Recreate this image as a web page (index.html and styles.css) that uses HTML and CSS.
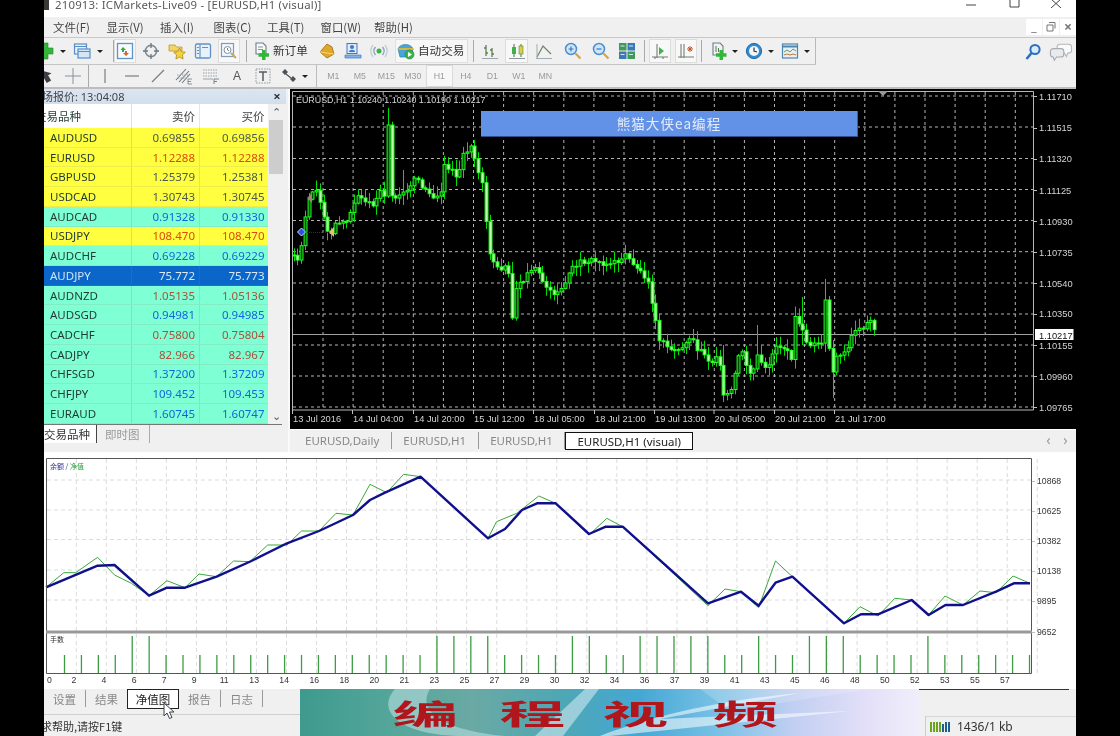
FILE: index.html
```html
<!DOCTYPE html>
<html lang="zh">
<head>
<meta charset="utf-8">
<title>MetaTrader 4</title>
<link rel="stylesheet" href="styles.css">
</head>
<body>
<svg class="defs" width="0" height="0" aria-hidden="true">
  <symbol id="i-plus" viewBox="0 0 18 18"><path d="M6 1h6v5h5v6h-5v5H6v-5H1V6h5z" fill="#35b53a" stroke="#1f8c2a" stroke-width=".6"/></symbol>
  <symbol id="i-prof" viewBox="0 0 18 18"><rect x="1.5" y="2" width="12" height="10" fill="#e4f0fb" stroke="#5b8fc4" stroke-width="1.2"/><rect x="5" y="7" width="12" height="9" fill="#d5e6f7" stroke="#5b8fc4" stroke-width="1.2"/><path d="M1.5 4.5h12M5 9.5h12" stroke="#5b8fc4"/></symbol>
  <symbol id="i-arrows" viewBox="0 0 18 18"><rect x="1.5" y="1.5" width="15" height="15" fill="#f6fafd" stroke="#5f93c8" stroke-width="1.3"/><path d="M5 4l3 3H6v2H4V7H2.500z" fill="#35a83a" transform="translate(2 1)"/><path d="M10 14l-3-3h2V9h2v2h2z" fill="#d8662a"/></symbol>
  <symbol id="i-cross" viewBox="0 0 18 18"><circle cx="9" cy="9" r="5.600" fill="none" stroke="#7f8a93" stroke-width="1.600"/><path d="M9 1v5M9 12v5M1 9h5M12 9h5" stroke="#6b757d" stroke-width="1.300"/></symbol>
  <symbol id="i-star" viewBox="0 0 18 18"><path d="M1 3h6l1.500 2H14v4H1z" fill="#f3d468" stroke="#b99a34" stroke-width=".8"/><path d="M11.500 6l1.800 3.700 4 .5-2.900 2.800.7 4-3.600-1.900-3.600 1.900.7-4-2.900-2.800 4-.5z" fill="#f5d23c" stroke="#a78a20" stroke-width=".8"/></symbol>
  <symbol id="i-list" viewBox="0 0 18 18"><rect x="1.500" y="2" width="15" height="14" rx="1.500" fill="#e9f2fb" stroke="#5f93c8" stroke-width="1.300"/><path d="M6 2.500v13" stroke="#5f93c8" stroke-width="1.200"/><path d="M3 5.500h2M3 8.500h2M3 11.500h2M8 5.500h6" stroke="#6c8fb2"/></symbol>
  <symbol id="i-test" viewBox="0 0 18 18"><rect x="1.500" y="1.500" width="12" height="13" fill="#f3f7fb" stroke="#7f9dbb" stroke-width="1.200"/><circle cx="7.500" cy="8" r="3.500" fill="#fff" stroke="#8391a0"/><path d="M7.500 6v2l1.500 1" stroke="#707a84" fill="none"/><path d="M11 11l5 5" stroke="#d8a840" stroke-width="2"/></symbol>
  <symbol id="i-order" viewBox="0 0 18 18"><path d="M3 1h7l3 3v8H3z" fill="#f6f8fa" stroke="#6f7d8a" stroke-width="1.100"/><path d="M5 5h5M5 7.500h5" stroke="#8a97a3"/><path d="M9 8h3.500v3.300h3.500v3.400h-3.500V18H9v-3.300H5.500v-3.400H9z" fill="#33b53a"/></symbol>
  <symbol id="i-gold" viewBox="0 0 18 18"><path d="M2 10l7-8 5 3 2 7-7 4z" fill="#e0a72a" stroke="#a87412" stroke-width=".9"/><path d="M2 10l7 1 7 1" stroke="#f6d777" fill="none"/></symbol>
  <symbol id="i-person" viewBox="0 0 18 18"><rect x="3" y="1.500" width="10" height="10" fill="#dfeafa" stroke="#3f78c6"/><circle cx="8" cy="5" r="2" fill="#3f78c6"/><path d="M5 10c0-3 6-3 6 0z" fill="#3f78c6"/><path d="M1 13h16v3H1z" fill="#7fb0e6" stroke="#3f78c6" stroke-width=".7"/></symbol>
  <symbol id="i-signal" viewBox="0 0 18 18"><circle cx="9" cy="9" r="2.500" fill="#3eb04a"/><path d="M5.500 5a6 6 0 0 0 0 8M12.500 5a6 6 0 0 1 0 8" fill="none" stroke="#8aa4bc" stroke-width="1.500"/><path d="M3 3a9.500 9.500 0 0 0 0 12M15 3a9.500 9.500 0 0 1 0 12" fill="none" stroke="#c0ccd6" stroke-width="1.300"/></symbol>
  <symbol id="i-auto" viewBox="0 0 18 18"><path d="M1 7c2-6 13-6 15 0l-2 8H3z" fill="#46a6dc" stroke="#2f7fae" stroke-width=".7"/><path d="M1.500 7h15" stroke="#d6b93a" stroke-width="2"/><circle cx="12.500" cy="12.500" r="4.500" fill="#39b54a" stroke="#1f8530" stroke-width=".6"/><path d="M11 10l4 2.500-4 2.500z" fill="#fff"/></symbol>
  <symbol id="i-bars" viewBox="0 0 18 18"><path d="M5 3v11M3 6h2M5 11h2M11 6v9M9 8h2M11 12h2" stroke="#5d7f52" stroke-width="1.300" fill="none"/><path d="M1 16.500h16" stroke="#9aa5ae"/></symbol>
  <symbol id="i-candle" viewBox="0 0 18 18"><path d="M6 2v13M13 2v13" stroke="#5d7f52" stroke-width="1.100"/><rect x="4" y="5" width="4" height="7" fill="#3cb44a"/><rect x="11" y="4" width="4" height="8" fill="#d9d23c" stroke="#5d7f52" stroke-width=".6"/><path d="M1 16.500h16" stroke="#8a97a3"/></symbol>
  <symbol id="i-line" viewBox="0 0 18 18"><path d="M2 15L8 4l8 8" fill="none" stroke="#6d8a63" stroke-width="1.300"/><path d="M1 16.500h16M2 2v14" stroke="#a0abb4"/></symbol>
  <symbol id="i-zin" viewBox="0 0 18 18"><circle cx="7" cy="7" r="5.500" fill="#cfe6f8" stroke="#4b8fd0" stroke-width="1.500"/><path d="M4.500 7h5M7 4.500v5" stroke="#3a78b8" stroke-width="1.200"/><path d="M11 11l5.500 5.500" stroke="#d7a63e" stroke-width="2.200"/></symbol>
  <symbol id="i-zout" viewBox="0 0 18 18"><circle cx="7" cy="7" r="5.500" fill="#cfe6f8" stroke="#4b8fd0" stroke-width="1.500"/><path d="M4.500 7h5" stroke="#3a78b8" stroke-width="1.200"/><path d="M11 11l5.500 5.500" stroke="#d7a63e" stroke-width="2.200"/></symbol>
  <symbol id="i-tile" viewBox="0 0 18 18"><rect x="1" y="1" width="7.500" height="7.500" fill="#3f9a55"/><rect x="9.500" y="1" width="7.500" height="7.500" fill="#3a78b8"/><rect x="1" y="9.500" width="7.500" height="7.500" fill="#3a78b8"/><rect x="9.500" y="9.500" width="7.500" height="7.500" fill="#3f9a55"/><path d="M2.500 4h4M11 4h4M2.500 12.500h4M11 12.500h4" stroke="#d8e8f4"/></symbol>
  <symbol id="i-shift" viewBox="0 0 18 18"><path d="M6 2v14M1 15h16M4 15v2M12 15v2" stroke="#6f7f73" stroke-width="1.100"/><path d="M8 5l5 4-5 4z" fill="#3cb44a"/></symbol>
  <symbol id="i-scroll" viewBox="0 0 18 18"><path d="M4 2v14M7 2v14M1 15h16" stroke="#6f7f73" stroke-width="1.100"/><path d="M13 4v6M10 7h6M11 5l4 4M15 5l-4 4" stroke="#c0562a" stroke-width="1"/></symbol>
  <symbol id="i-new" viewBox="0 0 18 18"><path d="M3 1h7l3 3v9H3z" fill="#eef2f5" stroke="#6f7d8a" stroke-width="1.100"/><path d="M6 4v6M8.500 6v4" stroke="#5c7a50"/><path d="M9.500 8h3.500v3.300h3.500v3.400H13V18H9.500v-3.300H6v-3.400h3.500z" fill="#33b53a"/></symbol>
  <symbol id="i-clock" viewBox="0 0 18 18"><circle cx="9" cy="9" r="7.600" fill="#2f8ad2" stroke="#1d6aa8"/><circle cx="9" cy="9" r="5" fill="#f2f6f8"/><path d="M9 5.500V9l3 1" stroke="#333" fill="none" stroke-width="1.200"/></symbol>
  <symbol id="i-tpl" viewBox="0 0 18 18"><rect x="1.500" y="2" width="15" height="14" fill="#e6f0f6" stroke="#4e86ad" stroke-width="1.200"/><path d="M1.500 4.500h15" stroke="#4e86ad" stroke-width="2"/><path d="M3 10l3-2 3 2 3-3 3 2" stroke="#53a45a" fill="none"/><path d="M3 13l3-1 3 1 3-1 3 1" stroke="#c2743a" fill="none"/></symbol>
  <symbol id="i-search" viewBox="0 0 18 18"><circle cx="11" cy="6.500" r="4.600" fill="#d8ebfa" stroke="#2c6fc0" stroke-width="2"/><path d="M7.500 10L2.500 16" stroke="#2c6fc0" stroke-width="2.600"/></symbol>
  <symbol id="i-chat" viewBox="0 0 20 18"><path d="M9 2h8a2.500 2.500 0 0 1 2.500 2.500v3A2.500 2.500 0 0 1 17 10h-1l-1 3-2-3H9a2.500 2.500 0 0 1-2.500-2.500v-3A2.500 2.500 0 0 1 9 2z" fill="#fafafa" stroke="#b3b8bc"/><path d="M3 6h7a2.500 2.500 0 0 1 2.500 2.500v2.500A2.500 2.500 0 0 1 10 13.500H6l-2 3-1-3a2.500 2.500 0 0 1-2.500-2.500V8.500A2.500 2.500 0 0 1 3 6z" fill="#e8eaeb" stroke="#a6abb0"/></symbol>
  <symbol id="i-pick" viewBox="0 0 18 18"><path d="M9 3l7 7h-4v6H7v-6H3z" fill="#3b3f44" transform="rotate(-30 9 9)"/></symbol>
  <symbol id="i-crossh" viewBox="0 0 18 18"><path d="M9 1v16M1 9h16" stroke="#8a9299" stroke-width="1"/></symbol>
  <symbol id="i-vline" viewBox="0 0 18 18"><path d="M9 2v14" stroke="#767f87" stroke-width="1.200"/></symbol>
  <symbol id="i-hline" viewBox="0 0 18 18"><path d="M2 9h14" stroke="#767f87" stroke-width="1.200"/></symbol>
  <symbol id="i-trend" viewBox="0 0 18 18"><path d="M3 15L15 3" stroke="#767f87" stroke-width="1.200"/></symbol>
  <symbol id="i-fibo" viewBox="0 0 18 18"><path d="M1 13L11 2M4 15L14 4M7 16l8-9" stroke="#6f7880" stroke-width="1.100"/><path d="M2 8h11M3 11h10" stroke="#9aa2a9" stroke-dasharray="1.500 1"/><path d="M13 12h4M13 12v5M13 14.500h3M13 17h4" stroke="#6f7880" stroke-width=".8"/></symbol>
  <symbol id="i-fline" viewBox="0 0 18 18"><path d="M1 3h14M1 6h14M1 9h14" stroke="#9aa2a9" stroke-dasharray="1.500 1"/><path d="M1 12h10" stroke="#9aa2a9"/><path d="M12 12h5M12 12v5M12 14.500h3" stroke="#6f7880" stroke-width=".9"/></symbol>
  <symbol id="i-tbox" viewBox="0 0 18 18"><rect x="2" y="2" width="14" height="14" fill="none" stroke="#8d959c" stroke-dasharray="1.500 1.200"/><path d="M5 5h8M9 5v9" stroke="#555c63" stroke-width="1.500"/></symbol>
  <symbol id="i-shapes" viewBox="0 0 18 18"><path d="M2 5l3-3 3 3-3 3zM10 12l3-3 3 3-3 3z" fill="#4b5258"/><path d="M6 7l5 4" stroke="#4b5258" stroke-width="1.200"/></symbol>
</svg>

<div class="app">
  <header class="titlebar">
    <span class="appicon"></span>
    <span class="title-text">210913: ICMarkets-Live09 - [EURUSD,H1 (visual)]</span>
    <span class="winbtns">
      <span class="winbtn"><svg width="12" height="12" viewBox="0 0 12 12"><path d="M1 5h10" class="win-stroke"/></svg></span>
      <span class="winbtn"><svg width="12" height="12" viewBox="0 0 12 12"><path d="M2-3h9v10H2z" class="win-stroke"/></svg></span>
      <span class="winbtn"><svg width="12" height="12" viewBox="0 0 12 12"><path d="M1-1l10 9M11-1L1 8" class="win-stroke"/></svg></span>
    </span>
  </header>

  <nav class="menubar">
    <span class="menu">文件(F)</span><span class="menu">显示(V)</span><span class="menu">插入(I)</span><span class="menu">图表(C)</span><span class="menu">工具(T)</span><span class="menu">窗口(W)</span><span class="menu">帮助(H)</span>
    <span class="mdi">
      <span class="mdi-btn">_</span>
      <span class="mdi-btn"><svg width="10" height="10" viewBox="0 0 10 10"><path d="M3 .5h6v6M1 3h6v6H1z" fill="none" stroke="#777"/></svg></span>
      <span class="mdi-btn mdi-x">×</span>
    </span>
  </nav>

  <div class="toolbar t1">
    <div class="tools tools-main">
      <span class="ic w13 clip"><svg class="s18 pull8"><use href="#i-plus"/></svg></span>
      <span class="caret w11"></span>
      <span class="ic w28"><svg class="s18"><use href="#i-prof"/></svg></span>
      <span class="caret w7"></span>
      <span class="sep sep-a"></span>
      <span class="ic w26 on"><svg class="s18"><use href="#i-arrows"/></svg></span>
      <span class="ic w26"><svg class="s18"><use href="#i-cross"/></svg></span>
      <span class="ic w26"><svg class="s18"><use href="#i-star"/></svg></span>
      <span class="ic w26"><svg class="s18"><use href="#i-list"/></svg></span>
      <span class="ic w26 on"><svg class="s18"><use href="#i-test"/></svg></span>
      <span class="sep sep-b"></span>
      <span class="ic w26"><svg class="s18"><use href="#i-order"/></svg></span>
      <span class="tool-label neworder">新订单</span>
      <span class="ic w26 ml5"><svg class="s18"><use href="#i-gold"/></svg></span>
      <span class="ic w26"><svg class="s18"><use href="#i-person"/></svg></span>
      <span class="ic w26"><svg class="s18"><use href="#i-signal"/></svg></span>
      <span class="autobox"><svg class="s18"><use href="#i-auto"/></svg><span class="tool-label">自动交易</span></span>
      <span class="sep sep-c"></span>
      <span class="ic w27"><svg class="s18"><use href="#i-bars"/></svg></span>
      <span class="ic w27 on"><svg class="s18"><use href="#i-candle"/></svg></span>
      <span class="ic w27"><svg class="s18"><use href="#i-line"/></svg></span>
      <span class="ic w28 ml2"><svg class="s18"><use href="#i-zin"/></svg></span>
      <span class="ic w28"><svg class="s18"><use href="#i-zout"/></svg></span>
      <span class="ic w24"><svg class="s18"><use href="#i-tile"/></svg></span>
      <span class="sep sep-d"></span>
      <span class="ic w26 on"><svg class="s18"><use href="#i-shift"/></svg></span>
      <span class="ic w26 on"><svg class="s18"><use href="#i-scroll"/></svg></span>
      <span class="sep sep-e"></span>
      <span class="ic w24 ml5"><svg class="s18"><use href="#i-new"/></svg></span>
      <span class="caret w7"></span>
      <span class="ic w26 ml3"><svg class="s18"><use href="#i-clock"/></svg></span>
      <span class="caret w7"></span>
      <span class="ic w26 ml3"><svg class="s18"><use href="#i-tpl"/></svg></span>
      <span class="caret w8"></span>
    </div>
    <div class="tools-right">
      <svg class="s18"><use href="#i-search"/></svg>
      <svg class="chat"><use href="#i-chat"/></svg>
    </div>
  </div>

  <div class="toolbar t2">
    <span class="ic w10 clip"><svg class="s18 pull8"><use href="#i-pick"/></svg></span>
    <span class="ic w26 ml6"><svg class="s18"><use href="#i-crossh"/></svg></span>
    <span class="sep sep-f"></span>
    <span class="ic w26"><svg class="s18"><use href="#i-vline"/></svg></span>
    <span class="ic w26 ml1"><svg class="s18"><use href="#i-hline"/></svg></span>
    <span class="ic w26"><svg class="s18"><use href="#i-trend"/></svg></span>
    <span class="ic w26"><svg class="s18"><use href="#i-fibo"/></svg></span>
    <span class="ic w26 ml1"><svg class="s18"><use href="#i-fline"/></svg></span>
    <span class="ic w26 letter">A</span>
    <span class="ic w26"><svg class="s18"><use href="#i-tbox"/></svg></span>
    <span class="ic w26"><svg class="s18"><use href="#i-shapes"/></svg></span>
    <span class="caret w6"></span>
    <span class="sep sep-g"></span>
    <span class="period">M1</span><span class="period">M5</span><span class="period">M15</span><span class="period">M30</span><span class="period period-on">H1</span><span class="period">H4</span><span class="period">D1</span><span class="period">W1</span><span class="period">MN</span>
  </div>

  <main class="workspace">
    <section class="market">
      <div class="mw-title"><span class="mw-title-text">市场报价: 13:04:08</span><span class="mw-close">×</span></div>
      <div class="mw-body">
        <div class="mw-table">
          <div class="mw-head"><span class="c-sym hd-sym">交易品种</span><span class="c-num">卖价</span><span class="c-num">买价</span></div>
          <div class="mw-row yellow"><span class="c-sym">AUDUSD</span><span class="c-num gray">0.69855</span><span class="c-num gray">0.69856</span></div>
          <div class="mw-row yellow"><span class="c-sym">EURUSD</span><span class="c-num red">1.12288</span><span class="c-num red">1.12288</span></div>
          <div class="mw-row yellow"><span class="c-sym">GBPUSD</span><span class="c-num gray">1.25379</span><span class="c-num gray">1.25381</span></div>
          <div class="mw-row yellow"><span class="c-sym">USDCAD</span><span class="c-num gray">1.30743</span><span class="c-num gray">1.30745</span></div>
          <div class="mw-row mint"><span class="c-sym">AUDCAD</span><span class="c-num blue">0.91328</span><span class="c-num blue">0.91330</span></div>
          <div class="mw-row yellow"><span class="c-sym">USDJPY</span><span class="c-num red">108.470</span><span class="c-num red">108.470</span></div>
          <div class="mw-row mint"><span class="c-sym">AUDCHF</span><span class="c-num blue">0.69228</span><span class="c-num blue">0.69229</span></div>
          <div class="mw-row selected"><span class="c-sym">AUDJPY</span><span class="c-num">75.772</span><span class="c-num">75.773</span></div>
          <div class="mw-row mint"><span class="c-sym">AUDNZD</span><span class="c-num brown">1.05135</span><span class="c-num brown">1.05136</span></div>
          <div class="mw-row mint"><span class="c-sym">AUDSGD</span><span class="c-num blue">0.94981</span><span class="c-num blue">0.94985</span></div>
          <div class="mw-row mint"><span class="c-sym">CADCHF</span><span class="c-num brown">0.75800</span><span class="c-num brown">0.75804</span></div>
          <div class="mw-row mint"><span class="c-sym">CADJPY</span><span class="c-num brown">82.966</span><span class="c-num brown">82.967</span></div>
          <div class="mw-row mint"><span class="c-sym">CHFSGD</span><span class="c-num blue">1.37200</span><span class="c-num blue">1.37209</span></div>
          <div class="mw-row mint"><span class="c-sym">CHFJPY</span><span class="c-num blue">109.452</span><span class="c-num blue">109.453</span></div>
          <div class="mw-row mint"><span class="c-sym">EURAUD</span><span class="c-num blue">1.60745</span><span class="c-num blue">1.60747</span></div>
        </div>
        <div class="scrollbar">
          <span class="sb-arrow">⌃</span>
          <span class="sb-thumb"></span>
          <span class="sb-arrow sb-down">⌄</span>
        </div>
      </div>
      <div class="mw-tabs"><span class="mw-tab-on">交易品种</span><span class="mw-tab">即时图</span></div>
    </section>

    <section class="chartpane">
      <div class="chartview">
        <svg id="price" class="price-svg" viewBox="290 89 786 340" aria-label="EURUSD H1 chart"></svg>
        <div class="ea-banner">熊猫大侠ea编程</div>
      </div>
      <div class="chart-tabs">
        <span class="ct">EURUSD,Daily</span><span class="ct">EURUSD,H1</span><span class="ct">EURUSD,H1</span><span class="ct-on">EURUSD,H1 (visual)</span>
        <span class="ct-nav">‹</span><span class="ct-nav">›</span>
      </div>
    </section>
  </main>

  <section class="tester">
    <svg id="equity" class="equity-svg" viewBox="44 452 1032 237" aria-label="Equity chart"></svg>
  </section>

  <footer class="bottom">
    <div class="bottom-left">
      <div class="tester-tabs">
        <span class="tt">设置</span><span class="tt tt-plain">结果</span><span class="tt-on">净值图</span><span class="tt">报告</span><span class="tt">日志</span>
        <svg class="cursor" width="14" height="18" viewBox="0 0 14 18"><path d="M1 1v13l3-3 2.500 5.500 2.500-1L6.500 10H11z" fill="#fff" stroke="#3a4450"/></svg>
      </div>
      <div class="status-text">求帮助,请按F1键</div>
    </div>
    <div class="promo">
      <svg class="promo-art" viewBox="0 0 619 47" preserveAspectRatio="none" aria-hidden="true">
        <path d="M95 0c-20 22 5 47 70 47h40C150 42 115 25 130 0z" fill="#bfe2e4" opacity=".55"/>
        <path d="M300 47C345 30 410 12 500 4l-140 26 190-8-240 25z" fill="#fff" opacity=".55"/>
        <path d="M235 47l50-47h14l-36 47z" fill="#eaf6fb" opacity=".5"/>
        <path d="M400 0h170L430 22z" fill="#fff" opacity=".18"/>
      </svg>
      <span class="pc pc1">编</span><span class="pc pc2">程</span><span class="pc pc3">视</span><span class="pc pc4">频</span>
    </div>
    <div class="bottom-right">
      <div class="br-tabs"></div>
      <div class="br-status">
        <svg class="net" width="22" height="12" viewBox="0 0 22 12"><path d="M1 1v10M4 1v10M7 1v10M10 1v10" stroke="#6aa51e" stroke-width="2"/><path d="M13 3v8M16 1v10M19 1v10" stroke="#1c5f93" stroke-width="2"/></svg>
        <span>1436/1 kb</span>
      </div>
    </div>
  </footer>
</div>
<script src="chart.js"></script>
</body>
</html>
```
FILE: styles.css
```css
* { box-sizing: border-box; }
html, body { margin: 0; height: 100%; background: #000; overflow: hidden; }
body { font-family: "Noto Sans", "Noto Sans CJK SC", sans-serif; }
.defs { position: absolute; }
.app {
  width: 1032px; height: 736px; margin-left: 44px; background: #f0f0f0;
  display: flex; flex-direction: column; overflow: hidden; color: #333;
  filter: blur(.4px);
}

/* title bar */
.titlebar { height: 17px; background: #fff; display: flex; align-items: flex-start; flex: none; }
.appicon { width: 5px; height: 10px; background: #3a3a34; flex: none; }
.title-text { margin-left: 6px; font: 11.400px/10px "Noto Sans", sans-serif; color: #5a5a5a; white-space: nowrap; letter-spacing: .2px; }
.winbtns { margin-left: auto; display: flex; margin-right: 0; }
.winbtn { width: 43px; display: flex; justify-content: center; }
.winbtn:last-child { width: 41px; }
.win-stroke { fill: none; stroke: #444; stroke-width: 1; }

/* menu */
.menubar { height: 21px; flex: none; display: flex; align-items: center; padding-left: 9px; border-bottom: 1px solid #c8c8c8; font-size: 11.400px; color: #444; }
.menu { width: 53.500px; white-space: nowrap; font-family: "Noto Sans CJK SC", sans-serif; }
.mdi { margin-left: auto; display: flex; height: 16px; gap: 1px; }
.mdi-btn { width: 16px; background: #fff; display: flex; align-items: center; justify-content: center; color: #777; font-size: 12px; line-height: 1; }
.mdi-x { font-weight: 700; font-size: 14px; }

/* toolbars */
.toolbar { flex: none; display: flex; align-items: center; }
.t1 { height: 27px; }
.t2 { height: 24px; border-bottom: 2px solid #bdbdbd; }
.tools-main { width: 772px; height: 27px; display: flex; align-items: center; border-right: 1px solid #b9b9b9; border-bottom: 1px solid #c4c4c4; flex: none; }
.tools-right { flex: 1; display: flex; justify-content: flex-end; align-items: center; gap: 5px; padding-right: 1px; }
.ic { display: flex; align-items: center; justify-content: center; height: 24px; flex: none; position: relative; }
.clip { overflow: hidden; justify-content: flex-start; }
.pull8 { margin-left: -8px; flex: none; }
.s18 { width: 18px; height: 18px; display: block; flex: none; }
.chat { width: 28px; height: 20px; display: block; flex: none; }
.w10 { width: 10px; } .w13 { width: 13px; } .w24 { width: 24px; } .w26 { width: 26px; } .w27 { width: 27px; } .w28 { width: 28px; }
.ml1 { margin-left: 1px; } .ml2 { margin-left: 2px; } .ml3 { margin-left: 3px; } .ml5 { margin-left: 5px; } .ml6 { margin-left: 6px; }
.on::before { content: ""; position: absolute; left: 2px; right: 2px; top: 0; bottom: 0; background: #f8f8f8; border: 1px solid #dcdcdc; }
.on svg { position: relative; }
.caret { display: flex; align-items: center; justify-content: center; height: 20px; flex: none; }
.caret::after { content: ""; border: 3px solid transparent; border-top: 3.500px solid #222; border-bottom: 0; }
.w6 { width: 6px; } .w7 { width: 7px; } .w8 { width: 8px; } .w11 { width: 11px; }
.sep { width: 1px; height: 22px; background: #a9a9a9; flex: none; }
.sep-a { margin: 0 -2px 0 10px; }
.sep-b { margin: 0 2px 0 4px; }
.sep-c { margin: 0 2px 0 5px; }
.sep-d { margin: 0 2px 0 5px; }
.sep-e { margin: 0 0 0 2px; }
.sep-f { margin: 0 3px 0 2px; }
.sep-g { margin: 0 3px 0 8px; background: #bbb; }
.tool-label { font: 11.600px/1 "Noto Sans CJK SC", sans-serif; color: #333; white-space: nowrap; }
.neworder { margin-left: -2px; width: 36px; }
.autobox { width: 73px; height: 24px; margin-left: 3px; background: #f7f7f7; border: 1px solid #e0e0e0; display: flex; align-items: center; gap: 3px; padding-left: 1px; flex: none; }
.letter { font: 12px "Liberation Sans", sans-serif; color: #555; }
.period { width: 26.500px; height: 22px; display: flex; align-items: center; justify-content: center; font: 8.800px "Liberation Sans", sans-serif; color: #9a9a9a; flex: none; }
.period-on { background: #f8f8f8; border: 1px solid #dadada; color: #999; }

/* workspace */
.workspace { height: 363px; flex: none; display: grid; grid-template-columns: 246px 786px; }
.market { display: flex; flex-direction: column; border-right: 2px solid #fafafa; overflow: hidden; }
.mw-title { height: 15px; flex: none; display: flex; align-items: center; background: linear-gradient(#dbe6f2, #d2deec); margin-right: 2px; }
.mw-title-text { margin-left: -13px; font-size: 11px; line-height: 15px; color: #444; white-space: nowrap; }
.mw-close { margin-left: auto; width: 18px; text-align: center; font-size: 13px; font-weight: 700; line-height: 15px; color: #333; }
.mw-body { display: flex; height: 320px; flex: none; background: #f0f0f0; }
.mw-table { width: 224px; flex: none; display: grid; grid-template-rows: 24px repeat(15, 19.730px); }
.mw-head, .mw-row { display: grid; grid-template-columns: 87.500px 68px 68.500px; align-items: center; font-size: 11.500px; }
.mw-head { background: #fff; color: #444; font-family: "Noto Sans CJK SC", sans-serif; }
.mw-row { border-bottom: 1px solid rgba(150,150,130,.18); }
.c-sym { padding-left: 6px; height: 100%; display: flex; align-items: center; border-right: 1px solid rgba(130,130,120,.25); color: #1f3a34; white-space: nowrap; }
.hd-sym { padding-left: 0; margin-left: -9px; }
.c-num { height: 100%; display: flex; align-items: center; justify-content: flex-end; padding-right: 3.500px; border-right: 1px solid rgba(130,130,120,.2); }
.c-num:last-child { border-right: 0; }
.yellow { background: #ffff40; }
.mint { background: #7fffd4; }
.selected { background: #0a66c8; color: #dce9f7; }
.selected .c-sym { color: #cfe2f6; }
.gray { color: #4a5a50; }
.red { color: #dd4a10; }
.blue { color: #1464dc; }
.brown { color: #a8523a; }
.scrollbar { width: 16px; margin-left: 0; flex: none; display: flex; flex-direction: column; align-items: center; background: #f0f0f0; color: #555; }
.sb-arrow { height: 16px; font-size: 11px; line-height: 16px; flex: none; }
.sb-thumb { width: 14px; height: 54px; background: #cdcdcd; flex: none; margin-top: 0; }
.sb-down { margin-top: auto; }
.mw-tabs { height: 19px; flex: none; display: flex; border-top: 1px solid #777; align-items: stretch; font-size: 11.500px; margin-right: 6px; font-family: "Noto Sans CJK SC", sans-serif; }
.mw-tab-on { width: 53px; background: #fff; border-right: 1px solid #444; display: flex; align-items: center; padding-left: 0; overflow: hidden; color: #333; white-space: nowrap; }
.mw-tab { width: 53px; padding-left: 8px; border-right: 1px solid #aaa; display: flex; align-items: center; color: #999; }

.chartpane { display: flex; flex-direction: column; }
.chartview { height: 340px; flex: none; background: #000; position: relative; }
.price-svg { width: 786px; height: 340px; display: block; }
.ea-banner { position: absolute; left: 191px; top: 22px; width: 377px; height: 26px; background: #6291e8; border-bottom: 1px solid #2f4f8f; border-right: 1px solid #3f5f9f; color: #e4ecfa; font: 13.500px/25px "Noto Sans CJK SC", sans-serif; letter-spacing: 1.100px; text-align: center; }
.chart-tabs { height: 23px; flex: none; display: flex; align-items: flex-start; border-top: 1px solid #fff; padding-top: 2px; font-size: 11.500px; color: #888; border-bottom: 0; background: #f0f0f0; }
.ct { height: 17px; padding: 0 11.500px; display: flex; align-items: center; border-right: 1px solid #999; white-space: nowrap; }
.ct:first-child { padding-left: 15px; }
.ct-on { height: 18px; margin-left: 0; padding: 0 11px; display: flex; align-items: center; background: #fff; border: 1px solid #111; color: #222; white-space: nowrap; }
.ct-nav { width: 17px; text-align: center; font-size: 14px; line-height: 16px; color: #999; }
.ct-nav:nth-last-child(2) { margin-left: auto; }
.ct-nav:last-child { margin-right: 2px; }

/* tester */
.tester { height: 237px; flex: none; background: #fff; }
.equity-svg { width: 1032px; height: 237px; display: block; }

/* bottom */
.bottom { height: 47px; flex: none; display: grid; grid-template-columns: 256px 619px 157px; }
.bottom-left { display: flex; flex-direction: column; overflow: hidden; }
.tester-tabs { height: 26px; flex: none; display: flex; align-items: flex-start; border-bottom: 1px solid #cfcfcf; font-family: "Noto Sans CJK SC", sans-serif; font-size: 11.500px; color: #888; padding-left: 9px; position: relative; }
.tt { height: 17px; margin-top: 1px; padding: 0 9px 0 0; margin-right: 9px; border-right: 1px solid #999; display: flex; align-items: center; white-space: nowrap; }
.tt-plain { border-right: 0; margin-right: 0; }
.tt-on { width: 52px; height: 20px; margin-right: 9px; background: #fff; border: 1px solid #222; display: flex; align-items: center; justify-content: center; color: #222; flex: none; }
.cursor { position: absolute; left: 119px; top: 13px; }
.status-text { font: 11px/22px "Noto Sans CJK SC", sans-serif; color: #333; margin-left: -3px; white-space: nowrap; }
.promo { position: relative; background: linear-gradient(90deg, #3e9a8e 0%, #55a69b 15%, #6aa9a4 28%, #4ea7b4 42%, #44a8d4 55%, #7cc2e6 68%, #c2cff2 80%, #e4e0f8 92%, #f0eefb 100%); display: flex; overflow: hidden; padding-left: 109px; }
.promo-art { position: absolute; inset: 0; width: 100%; height: 100%; }
.pc { position: relative; width: 33px; height: 47px; display: flex; align-items: center; justify-content: center; font: 700 28px/1 "Noto Sans CJK SC", sans-serif; color: #b0161c; transform: scaleX(2.350); flex: none; }
.pc2 { margin-left: 74px; }
.pc3 { margin-left: 70px; }
.pc4 { margin-left: 77px; }
.bottom-right { display: flex; flex-direction: column; }
.br-tabs { height: 27px; border-top: 1px solid #333; margin-right: 7px; flex: none; }
.br-status { flex: 1; display: flex; align-items: center; gap: 5px; margin-left: 6px; padding-left: 4px; border-left: 1px solid #ccc; border-top: 1px solid #d6d6d6; font-size: 12px; color: #333; background: #f0f0f0; }
.net { flex: none; }

/* svg chart parts */
.grid-d { stroke: #b4b4b4; stroke-width: 1; stroke-dasharray: 3 3; }
.frame { stroke: #b8b8b8; stroke-width: 1; fill: none; }
.tick { stroke: #c0c0c0; stroke-width: 1; }
.curr { stroke: #a0a0a0; stroke-width: 1; }
.axis-t { fill: #d4d4d4; font: 9.300px "Liberation Sans", sans-serif; }
.head-t { fill: #d8d8d8; font: 8.900px "Liberation Sans", sans-serif; }
.tag-b { fill: #fff; }
.tag-t { fill: #111; font: 9.300px "Liberation Sans", sans-serif; }
.wick { stroke: #00e000; stroke-width: 1; }
.bull { fill: #004a00; stroke: #20ff20; stroke-width: 1; }
.bear { fill: #b8ffa8; stroke: #20ff20; stroke-width: 1; }
.mark-line { stroke: #1428b0; stroke-width: 1; stroke-dasharray: 1 1; }
.mark-open { fill: #2a50e8; stroke: #c8d8ff; stroke-width: 1; }
.mark-a { fill: #e8c070; }
.mark-b { fill: #a08070; }
.tri { fill: #999; }
.g2 { stroke: #dcdcdc; stroke-width: 1; stroke-dasharray: 4 3; }
.box2 { stroke: #555; stroke-width: 1; fill: none; }
.sep2 { stroke: #999; stroke-width: 3; }
.bal { fill: none; stroke: #10108c; stroke-width: 2.400; stroke-linejoin: round; }
.eq { fill: none; stroke: #3aa83a; stroke-width: 1; }
.vol { stroke: #3c9c44; stroke-width: 1.300; }
.axis2 { fill: #333; font: 8.700px "Liberation Sans", sans-serif; }
.legend { font: 7px "Noto Sans CJK SC", sans-serif; }
.leg-a { fill: #30308c; } .leg-b { fill: #28a03a; } .leg-c { fill: #333; }
```
FILE: chart.js
```js
(function () {
  var NS = 'http://www.w3.org/2000/svg';
  function el(parent, tag, attrs, text) {
    var n = document.createElementNS(NS, tag);
    for (var k in attrs) n.setAttribute(k, attrs[k]);
    if (text !== undefined) n.textContent = text;
    parent.appendChild(n);
    return n;
  }
  function line(p, a, b, c, d, cls) { return el(p, 'line', { x1: a, y1: b, x2: c, y2: d, 'class': cls }); }
  function hash(i) { var s = Math.sin(i * 12.9898 + 4.1) * 43758.5453; return s - Math.floor(s); }

  /* ---------- price chart ---------- */
  var svg = document.getElementById('price');
  var i;
  var hy = [96, 127, 158.5, 189.5, 220.5, 251.7, 283, 314, 345, 376, 407];
  hy.forEach(function (y) { line(svg, 293, y, 1033, y, 'grid-d'); });
  for (i = 0; i < 24; i++) {
    var gx = 323 + i * 30.1;
    line(svg, gx, 92, gx, 410, 'grid-d');
  }
  el(svg, 'path', { d: 'M292.500 91.500H1033.500V410H292.500Z', 'class': 'frame' });
  line(svg, 293, 334.5, 1034, 334.5, 'curr');
  el(svg, 'path', { d: 'M878 91h10l-5 5z', 'class': 'tri' });

  var prices = [['1.11710', 96], ['1.11515', 127.5], ['1.11320', 158.5], ['1.11125', 190], ['1.10930', 221], ['1.10735', 252], ['1.10540', 283], ['1.10350', 313.5], ['1.10155', 345], ['1.09960', 376], ['1.09765', 407]];
  prices.forEach(function (p) {
    line(svg, 1033, Math.round(p[1]) + .5, 1037, Math.round(p[1]) + .5, 'tick');
    el(svg, 'text', { x: 1039, y: p[1] + 3.5, 'class': 'axis-t' }, p[0]);
  });
  el(svg, 'rect', { x: 1035, y: 329, width: 38.5, height: 11, 'class': 'tag-b' });
  el(svg, 'text', { x: 1039, y: 338.5, 'class': 'tag-t' }, '1.10217');

  var times = [['13 Jul 2016', 292], ['14 Jul 04:00', 352], ['14 Jul 20:00', 413], ['15 Jul 12:00', 473], ['18 Jul 05:00', 533], ['18 Jul 21:00', 594], ['19 Jul 13:00', 654], ['20 Jul 05:00', 713.5], ['20 Jul 21:00', 774], ['21 Jul 17:00', 834]];
  times.forEach(function (t) {
    line(svg, t[1] + .5, 410, t[1] + .5, 414, 'tick');
    el(svg, 'text', { x: t[1] + 1, y: 422, 'class': 'axis-t' }, t[0]);
  });
  el(svg, 'text', { x: 296, y: 103, 'class': 'head-t' }, 'EURUSD,H1  1.10240 1.10240 1.10190 1.10217');

  var keys = [[293,255],[297,262],[302,240],[306,205],[310,195],[315,190],[320,200],[325,222],[330,238],[335,224],[342,222],[348,222],[352,206],[356,196],[363,200],[373,207],[380,192],[385,198],[393,195],[396,198],[406,192],[415,178],[423,188],[433,198],[441,190],[443,162],[453,172],[457,182],[463,152],[472,147],[478,172],[483,188],[488,245],[492,262],[500,272],[506,266],[516,288],[523,280],[530,268],[537,268],[543,282],[548,290],[557,295],[563,285],[572,268],[580,262],[590,260],[607,264],[617,262],[625,255],[637,268],[648,280],[655,320],[658,338],[665,345],[670,350],[680,350],[687,340],[692,340],[697,350],[703,350],[711,365],[717,355],[725,395],[730,392],[733,380],[737,360],[742,350],[748,372],[753,372],[757,355],[762,365],[770,365],[775,345],[780,350],[787,350],[790,360],[793,360],[795,315],[802,330],[807,345],[815,345],[822,345],[828,345],[832,372],[835,355],[840,355],[847,350],[850,335],[855,330],[862,330],[865,322],[870,320],[875,330],[878,333]];
  function interp(x) {
    for (var k = 1; k < keys.length; k++) {
      if (x <= keys[k][0]) {
        var a = keys[k - 1], b = keys[k];
        return a[1] + (b[1] - a[1]) * (x - a[0]) / (b[0] - a[0]);
      }
    }
    return keys[keys.length - 1][1];
  }
  var spikes = [[389, 125, 108, 198], [512, 318, 262, 320], [825, 300, 279, 352], [725, 395, 345, 402], [833, 372, 340, 398], [757, 355, 325, 372], [802, 330, 297, 345], [404, 192, 170, 205]];
  var step = 3.77, n = 155, prev = 255;
  var bodies = [];
  for (i = 0; i < n; i++) {
    var x = 293.5 + i * step;
    var c = interp(x) + (hash(i) - .5) * 5;
    var hi = null, lo = null;
    spikes.forEach(function (s) {
      if (Math.abs(s[0] - x) < step / 2) { c = s[1]; hi = s[2]; lo = s[3]; }
    });
    var top = Math.min(prev, c), bot = Math.max(prev, c);
    if (hi === null) hi = top - 1 - hash(i + 300) * 9;
    if (lo === null) lo = bot + 1 + hash(i + 700) * 9;
    var rx = Math.round(x);
    line(svg, rx + .5, hi, rx + .5, lo, 'wick');
    bodies.push([rx, top, Math.max(bot - top, 1), c < prev ? 'bull' : 'bear']);
    prev = c;
  }
  bodies.forEach(function (b) {
    el(svg, 'rect', { x: b[0] - .9, y: b[1], width: 2.9, height: b[2], 'class': b[3] });
  });

  line(svg, 303, 232.5, 331, 232.5, 'mark-line');
  el(svg, 'path', { d: 'M301.500 228l4 4-4 4-4-4z', 'class': 'mark-open' });
  el(svg, 'path', { d: 'M334 227v10l-5-5z', 'class': 'mark-a' });
  el(svg, 'path', { d: 'M312 193v10l-5-5z', 'class': 'mark-b' });

  /* ---------- equity chart ---------- */
  var eq = document.getElementById('equity');
  [480, 510, 539.5, 570, 600].forEach(function (y) { line(eq, 47, y, 1031, y, 'g2'); });
  for (i = 0; i < 33; i++) {
    var vx = 76.3 + i * 30.03;
    line(eq, vx, 459, vx, 673, 'g2');
  }
  var balance = '46,587.3 97.6,565.7 114.5,565 149,595.7 167,587.7 185,587.7 216.6,576.7 251.4,561 287,543.3 319,531 353,515 370,500 385,492.7 420.5,476.7 488,538.3 505,529 522,510 537,503.3 555.7,503.3 589,534 605.8,526.7 622.7,526.7 658,558.3 708,603.3 741,591.7 758.6,605.7 775.5,582.7 792.4,576.7 844,623.3 861,614.3 878,614.3 911.7,600 928.6,615 945.5,605 963,605 996,591.7 1013.8,583.3 1030,583.3';
  var equity = '46,587.3 63.8,572.7 75.6,572.7 97.6,557.3 114.5,575 131.4,583.3 149,595.7 167,580.7 185,587.7 199,574 216.6,576.7 233.5,561 249.7,561.7 267.7,545 287,545 301.5,531 319,531 336,513.3 353,515 370,484.3 386.7,492.7 403.6,474.3 420.5,476.7 488,538.3 496.5,521.7 516.8,513.3 538.8,496 555.7,503.3 589,535 606.8,518.3 622.7,526.7 708,605.7 725,589 741,591.7 758.6,607.7 775.5,561 792.4,576.7 844,623.3 860,606.7 878,616 894.8,598.3 911.7,600 928.6,615 945,596 963,605 980,591 996,592.7 1013,576 1030,583.3';
  el(eq, 'polyline', { points: equity, 'class': 'eq' });
  el(eq, 'polyline', { points: balance, 'class': 'bal' });

  var heights = 'SSSSTTSSSSSSSSSSSSSSSSTTTTSSSSTTSSTTTTTSSTSSTTTSSSSTSSSSSS';
  for (i = 0; i < 58; i++) {
    var bx = 64.5 + i * 16.93;
    line(eq, bx, heights.charAt(i) === 'T' ? 636 : 655, bx, 673, 'vol');
  }
  el(eq, 'path', { d: 'M46.500 458.500H1031.500V673.500H46.500Z', 'class': 'box2' });
  line(eq, 46, 632, 1032, 632, 'sep2');

  [['10868', 481], ['10625', 511], ['10382', 540.7], ['10138', 571], ['9895', 601], ['9652', 631.7]].forEach(function (p) {
    line(eq, 1032, Math.round(p[1]) + .5, 1035, Math.round(p[1]) + .5, 'tick');
    el(eq, 'text', { x: 1037, y: p[1] + 3, 'class': 'axis2' }, p[0]);
  });
  var labels = '0 2 4 6 7 9 11 13 14 16 18 20 21 23 25 27 29 30 32 34 36 37 39 41 43 45 46 48 50 52 53 55 57'.split(' ');
  labels.forEach(function (t, k) {
    var lx = k === 0 ? 49.3 : 74 + (k - 1) * 30.03;
    el(eq, 'text', { x: lx, y: 683, 'text-anchor': 'middle', 'class': 'axis2' }, t);
  });
  var leg = el(eq, 'text', { x: 50, y: 469, 'class': 'legend' });
  el(leg, 'tspan', { 'class': 'leg-a' }, '余额 / ');
  el(leg, 'tspan', { 'class': 'leg-b' }, '净值');
  el(eq, 'text', { x: 50, y: 642, 'class': 'legend leg-c' }, '手数');
})();
```
